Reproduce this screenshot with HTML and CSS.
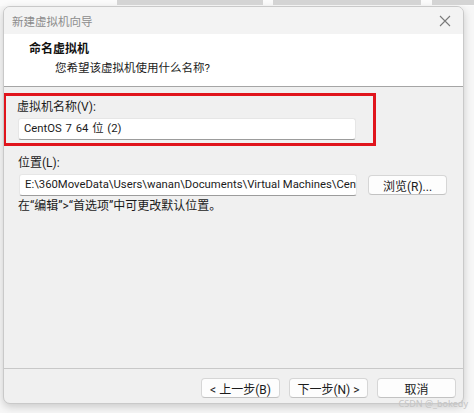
FILE: index.html
```html
<!DOCTYPE html>
<html lang="zh-CN">
<head>
<meta charset="utf-8">
<link rel="stylesheet" href="styles.css">
</head>
<body>
<div class="backdrop">
  <div class="tabs">
    <span class="tab t1"></span>
    <span class="tab t2"></span>
    <span class="tab t3"></span>
  </div>
  <div class="dialog">
    <div class="titlebar">
      <span class="title">新建虚拟机向导</span>
      <svg class="close" width="12" height="12" viewBox="0 0 12 12"><path d="M1 1L11 11M11 1L1 11" stroke="#7a7a7a" stroke-width="1.1" fill="none"/></svg>
    </div>
    <div class="header">
      <div class="h-title">命名虚拟机</div>
      <div class="h-sub">您希望该虚拟机使用什么名称?</div>
    </div>
    <div class="body">
      <div class="highlight">
        <div class="label">虚拟机名称(V):</div>
        <div class="input name-input">CentOS 7 64 位 (2)</div>
      </div>
      <div class="label loc-label">位置(L):</div>
      <div class="loc-row">
        <div class="input path-input">E:\360MoveData\Users\wanan\Documents\Virtual Machines\CentOS 7 64 位 (2)</div>
        <div class="btn browse">浏览(R)...</div>
      </div>
      <div class="hint">在“编辑”&gt;“首选项”中可更改默认位置。</div>
    </div>
    <div class="footer">
      <div class="btn">&lt; 上一步(B)</div>
      <div class="btn">下一步(N) &gt;</div>
      <div class="btn">取消</div>
    </div>
  </div>
  <div class="watermark">CSDN @_bokedy</div>
</div>
</body>
</html>
```
FILE: styles.css
```css
html, body {
  margin: 0;
  padding: 0;
}
body {
  width: 474px;
  height: 413px;
  overflow: hidden;
  background: #f7f7f7;
  font-family: Roboto, "Noto Sans CJK SC", sans-serif;
  font-size: 12px;
  color: #1b1b1b;
}
.backdrop {
  position: relative;
  width: 474px;
  height: 413px;
}
.tabs {
  display: flex;
  height: 6px;
  background: #fbfbfb;
}
.tab {
  display: block;
  height: 5px;
  background: #d4d4d4;
}
.t1 { margin-left: 117px; width: 146px; }
.t2 { margin-left: 10px; width: 148px; }
.t3 { margin-left: 11px; flex: 1; }

.dialog {
  margin-left: 3px;
  width: 459px;
  height: 396px;
  border: 1px solid #c9c9c9;
  border-radius: 7px;
  overflow: hidden;
  background: #f0f0f0;
  box-shadow: 0 3px 8px rgba(0,0,0,0.18);
  display: flex;
  flex-direction: column;
}
.titlebar {
  height: 27px;
  background: #f3f3f3;
  display: flex;
  align-items: center;
  justify-content: space-between;
  padding: 0 9px 0 8px;
}
.title {
  font-size: 11.5px;
  color: #8c8c8c;
}
.close {
  margin-right: 3px;
}
.header {
  background: #ffffff;
  border-bottom: 1px solid #a5a5a5;
  padding-left: 25px;
  box-sizing: border-box;
  height: 53px;
  padding-top: 7px;
}
.h-title {
  font-weight: bold;
  font-size: 12px;
  line-height: 17px;
  color: #111;
}
.h-sub {
  margin-left: 26px;
  margin-top: 2px;
  font-size: 11.5px;
  line-height: 17px;
  color: #1b1b1b;
}
.body {
  flex: 1;
  padding-top: 6px;
}
.highlight {
  width: 356px;
  border: 3px solid #e0141c;
  padding: 3px 0 3px 11px;
  margin-left: -1px;
}
.label {
  line-height: 17px;
  font-size: 12px;
}
.name-input {
  margin-top: 2px;
  width: 338px;
  margin-left: 1px;
  word-spacing: 1px;
}
.input {
  height: 22px;
  box-sizing: border-box;
  background: #ffffff;
  border: 1px solid #e6e6e6;
  border-bottom: 1px solid #9c9c9c;
  border-radius: 3px;
  padding: 0 4px 0 5px;
  line-height: 20px;
  font-size: 11.3px;
  white-space: nowrap;
  overflow: hidden;
  color: #1b1b1b;
}
.loc-label {
  margin: 9px 0 0 14px;
}
.loc-row {
  display: flex;
  align-items: center;
  margin-top: 2px;
  padding-left: 15px;
}
.path-input {
  width: 338px;
  text-overflow: clip;
}
.btn {
  height: 20px;
  box-sizing: border-box;
  width: 79px;
  background: #fdfdfd;
  border: 1px solid #d6d6d6;
  border-bottom-color: #c2c2c2;
  border-radius: 4px;
  display: flex;
  align-items: center;
  justify-content: center;
  font-size: 12px;
  color: #1b1b1b;
}
.browse {
  margin-left: 11px;
}
.hint {
  margin: 2px 0 0 14px;
  line-height: 17px;
  font-size: 12px;
}
.footer {
  height: 35px;
  box-sizing: border-box;
  border-top: 1px solid #c8c8c8;
  display: flex;
  justify-content: flex-end;
  gap: 9px;
  padding: 9px 7px 0 0;
}
.watermark {
  position: absolute;
  right: 6px;
  bottom: 3px;
  font-size: 9px;
  color: #c4c4c4;
  font-family: "Noto Sans", sans-serif;
}
```
